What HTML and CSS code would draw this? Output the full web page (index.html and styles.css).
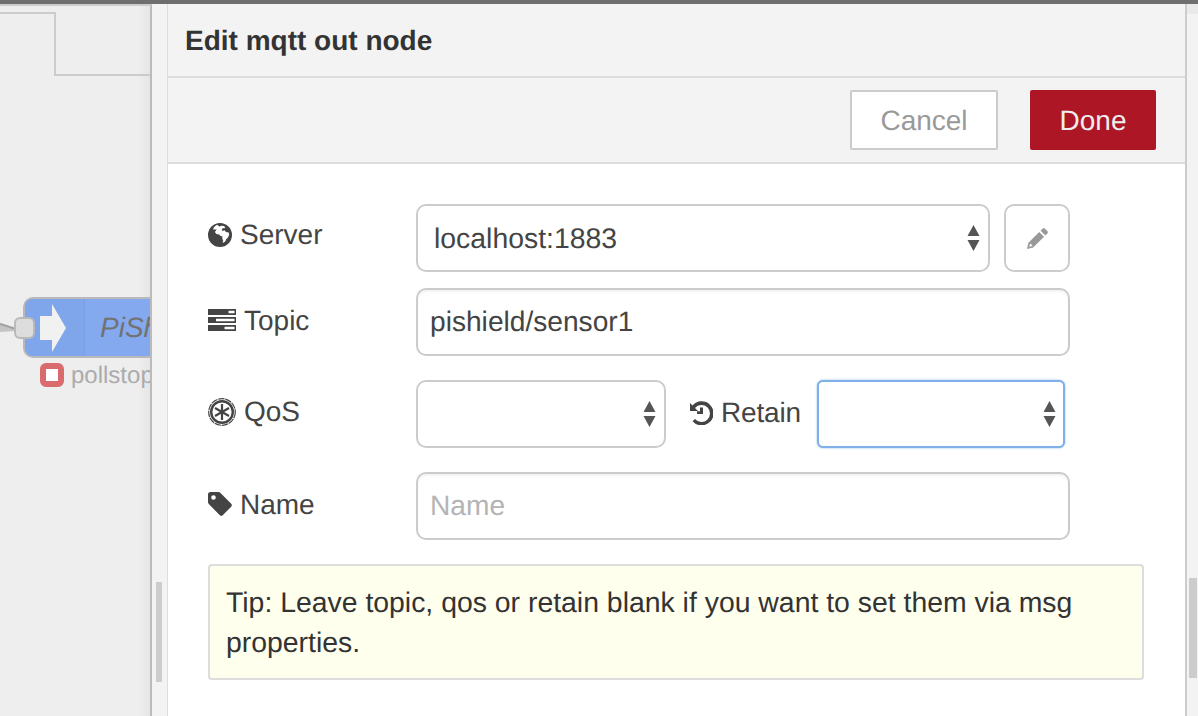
FILE: index.html
```html
<!DOCTYPE html>
<html lang="en">
<head>
<meta charset="utf-8">
<title>Edit mqtt out node</title>
<link rel="stylesheet" href="styles.css">
</head>
<body>
<div class="topbar"></div>
<div class="app">
  <div class="canvas">
    <div class="shade"></div>
    <div class="wire-a"></div>
    <div class="wire-b"></div>
    <svg class="link" viewBox="0 0 16 14"><path class="link-fill" d="M0 2l16 5v3L0 11z"/><path class="link-line" d="M0 3l16 5"/></svg>
    <div class="node">
      <div class="node-icon">
        <svg class="node-arrow" viewBox="0 0 26 48"><path d="M0 12h12V0l14 24-14 24V36H0z"/></svg>
      </div>
      <span class="node-label">PiShield</span>
    </div>
    <div class="port"></div>
    <div class="status">
      <span class="status-dot"></span>
      <span class="status-text">pollstop</span>
    </div>
  </div>
  <div class="gutter gutter-left"><div class="thumb thumb-left"></div></div>
  <div class="tray">
    <div class="tray-title">Edit mqtt out node</div>
    <div class="tray-toolbar">
      <button class="btn btn-cancel">Cancel</button>
      <button class="btn btn-done">Done</button>
    </div>
    <div class="tray-body">
      <div class="row row-server">
        <label class="label label-server">
          <svg class="icon icon-globe" viewBox="0 0 24 24"><path fill-rule="evenodd" d="M12 0a12 12 0 1 0 0 24 12 12 0 0 0 0-24zM9 1.700l2.500 1.800 2-.8 2.500.2 1.300 1.600-1.300 1-1-.4-1.300 1.400.8 1.400 2-.6 1.500 1.800 2.700.3.500 2.500-1.600 3-1.500 1.300-.7 2-1.800 1.400-1 .2.600-2.500-1-1.500.3-2.200-1.800-.6-1.600-1.500-2.800-.5-1.400-2 1.800-2.500L5 6.500l1-2.500z"/></svg>
          Server
        </label>
        <div class="select-wrap select-server">
          <select class="select"><option>localhost:1883</option></select>
          <svg class="updown" viewBox="0 0 12 26"><path d="M6 0l6 11H0zM0 15h12L6 26z"/></svg>
        </div>
        <button class="edit-btn">
          <svg class="icon-pencil" viewBox="0 0 24 24"><path d="M17.500 1.500a1.500 1.500 0 0 1 2 0l3 3a1.500 1.500 0 0 1 0 2l-2.300 2.300-5-5zM13.800 5.200l5 5L7.500 21.500 1 23l1.500-6.500zM4.300 17.200l-1 3.500 3.500-1-1-1.500z"/></svg>
        </button>
      </div>
      <div class="row">
        <label class="label label-topic">
          <svg class="icon icon-tasks" viewBox="0 0 28 22"><path fill-rule="evenodd" d="M0 0h28v6H0zM20.500 1.800v2.400h6V1.800zM0 8h28v6H0zM8 9.800v2.400h18.500V9.800zM0 16h28v6H0zM16.500 17.800v2.400h10v-2.400z"/></svg>
          Topic
        </label>
        <input class="input" type="text" value="pishield/sensor1">
      </div>
      <div class="row">
        <label class="label label-qos">
          <svg class="icon icon-qos" viewBox="0 0 28 28"><g fill="none" stroke="#444"><circle cx="14" cy="14" r="13.300" stroke-width="1.200" stroke-dasharray="6.500 .8"/><circle cx="14" cy="14" r="10.800" stroke-width="2.400"/><path stroke-width="2.200" d="M14 6v16M7 10l14 8M7 18l14-8"/></g><circle cx="14" cy="14" r="1.800" fill="#444"/></svg>
          QoS
        </label>
        <div class="select-wrap select-qos">
          <select class="select"><option></option></select>
          <svg class="updown" viewBox="0 0 12 26"><path d="M6 0l6 11H0zM0 15h12L6 26z"/></svg>
        </div>
        <label class="label label-retain">
          <svg class="icon icon-history" viewBox="0 0 24 24"><path d="M1 2v8h8L6 7a8.500 8.500 0 1 1 0 11l-2.500 2.200A12 12 0 1 0 3.500 4.500z"/><path d="M11 6.500h3V13h-6v-2.800h3z"/></svg>
          Retain
        </label>
        <div class="select-wrap select-retain">
          <select class="select select-focus"><option></option></select>
          <svg class="updown updown-retain" viewBox="0 0 12 26"><path d="M6 0l6 11H0zM0 15h12L6 26z"/></svg>
        </div>
      </div>
      <div class="row">
        <label class="label label-name">
          <svg class="icon icon-tag" viewBox="0 0 24 24"><path fill-rule="evenodd" d="M2.500 0h8a3 3 0 0 1 2 .9l10.500 10.600a2.400 2.400 0 0 1 0 3.400l-8 8a2.400 2.400 0 0 1-3.400 0L1 12.300A3.500 3.500 0 0 1 0 10V2.500A2.500 2.500 0 0 1 2.500 0zM5.500 3.200a2.300 2.300 0 1 0 0 4.600 2.300 2.300 0 0 0 0-4.600z"/></svg>
          Name
        </label>
        <input class="input" type="text" placeholder="Name">
      </div>
      <div class="tip">Tip: Leave topic, qos or retain blank if you want to set them via msg properties.</div>
    </div>
  </div>
  <div class="gutter gutter-right"><div class="thumb thumb-right"></div></div>
</div>
</body>
</html>
```

FILE: styles.css
```css
* { box-sizing: border-box; }
html, body { margin: 0; height: 716px; overflow: hidden; }
body { font-family: "Liberation Sans", Arial, sans-serif; color: #444; background: #fff; text-rendering: geometricPrecision; }

.topbar { height: 4px; background: #6e6e6e; }
.app { display: flex; height: 712px; }

/* workspace canvas */
.canvas { position: relative; width: 152px; flex: none; overflow: hidden; background: #eee; border-right: 2px solid #bbb; border-top: 2px solid #ccc; }
.shade { position: absolute; right: 0; top: 0; bottom: 0; width: 12px; background: linear-gradient(to right, rgba(0,0,0,0), rgba(0,0,0,.035)); }
.wire-a { position: absolute; left: 0; top: 6px; width: 56px; height: 2px; background: #ccc; z-index: 1; }
.wire-b { position: absolute; left: 54px; top: 6px; width: 96px; height: 64px; border-left: 2px solid #ccc; border-bottom: 2px solid #ccc; }
.link { position: absolute; left: 0; top: 315px; width: 16px; height: 14px; }
.link-fill { fill: #c4c4c4; }
.link-line { fill: none; stroke: #a2a2a2; stroke-width: 2; }
.node { position: absolute; left: 23px; top: 291px; width: 160px; height: 61px; display: flex; align-items: center; background: #84a9ee; border: 2px solid #b9b9b9; border-radius: 10px; }
.node-icon { width: 60px; height: 100%; flex: none; display: flex; align-items: center; padding-left: 15px; background: #7fa6ea; border-right: 1px solid #78a0e4; border-radius: 8px 0 0 8px; }
.node-arrow { width: 26px; height: 48px; fill: #f1f1f1; filter: blur(.5px); }
.node-label { margin-left: 15px; font-size: 28px; font-style: italic; color: #727272; white-space: nowrap; }
.port { position: absolute; left: 14px; top: 311px; width: 21px; height: 22px; background: #ddd; border: 2px solid #b9b9b9; border-radius: 6px; }
.status { position: absolute; left: 40px; top: 357px; height: 24px; display: flex; align-items: center; gap: 7px; white-space: nowrap; }
.status-dot { width: 24px; height: 24px; flex: none; background: #fff; border: 6px solid #d96a6e; border-radius: 6px; }
.status-text { font-size: 24px; line-height: 20px; margin-top: 1px; color: #ababab; }

/* side gutters */
.gutter { position: relative; flex: none; background: #f3f3f3; }
.gutter-left { width: 15px; }
.gutter-right { width: 11px; }
.gutter-right::before { content: ""; display: block; height: 10px; background: #e9e9e9; }
.thumb { position: absolute; height: 100px; background: #ccc; }
.thumb-left { left: 4px; top: 578px; width: 6px; }
.thumb-right { left: 2px; top: 574px; width: 8px; }

/* edit tray */
.tray { flex: none; width: 1020px; background: #fff; border-left: 1px solid #ddd; border-right: 2px solid #ccc; }
.tray-title { height: 74px; padding: 2px 17px 0; display: flex; align-items: center; background: #f3f3f3; border-bottom: 2px solid #ddd; font-size: 28px; font-weight: bold; color: #333; }
.tray-toolbar { height: 86px; padding-top: 12px; padding-right: 29px; display: flex; justify-content: flex-end; align-items: flex-start; gap: 32px; background: #f3f3f3; border-bottom: 2px solid #ddd; }
.btn { height: 60px; padding: 2px 0 0; font: 28px "Liberation Sans", Arial, sans-serif; text-rendering: geometricPrecision; border-radius: 2px; }
.btn-cancel { width: 148px; background: #fff; border: 2px solid #ccc; color: #999; }
.btn-done { width: 126px; background: #ad1625; border: 0; color: #eee; }

.tray-body { padding: 40px 40px 0; }
.row { display: flex; align-items: center; margin-bottom: 24px; height: 68px; }
.row-server { margin-bottom: 16px; }
.label { width: 208px; flex: none; display: flex; align-items: center; gap: 8px; font-size: 28px; color: #444; white-space: nowrap; }
.label-server { margin-bottom: 6px; }
.label-topic { margin-bottom: 2px; }
.label-qos { margin-bottom: 4px; }
.label-name { margin-bottom: 2px; }
.label-retain { width: auto; margin: 0 16px 2px 23px; letter-spacing: -.15px; }
.icon { flex: none; fill: #444; }
.icon-globe { width: 24px; height: 24px; }
.icon-tasks { width: 28px; height: 22px; margin-bottom: 3px; }
.icon-qos { width: 28px; height: 28px; }
.icon-tag { width: 24px; height: 24px; margin-bottom: 2px; }
.icon-history { width: 24px; height: 24px; }

.select-wrap { position: relative; flex: none; height: 68px; }
.select-server { width: 574px; }
.select-qos { width: 250px; }
.select-retain { width: 248px; }
.select { width: 100%; height: 100%; appearance: none; -webkit-appearance: none; padding: 2px 16px 0; font: 28.400px "Liberation Sans", Arial, sans-serif; text-rendering: geometricPrecision; color: #444; background: #fff; border: 2px solid #ccc; border-radius: 10px; outline: 0; }
.select-focus { border-color: #7fb0e8; border-radius: 6px; box-shadow: 0 0 2px #7fb0e8; }
.updown { position: absolute; right: 10px; top: 21px; width: 13px; height: 26px; fill: #555; }
.updown-retain { right: 9px; }
.edit-btn { width: 66px; height: 68px; flex: none; margin-left: 14px; padding: 0; display: flex; align-items: center; justify-content: center; background: #fff; border: 2px solid #ccc; border-radius: 10px; }
.icon-pencil { width: 23px; height: 23px; fill: #999; }
.input { width: 654px; height: 68px; flex: none; padding: 0 12px; font: 28.150px "Liberation Sans", Arial, sans-serif; text-rendering: geometricPrecision; color: #444; background: #fff; border: 2px solid #ccc; border-radius: 10px; box-shadow: inset 0 2px 2px rgba(0,0,0,.05); outline: 0; }
.input::placeholder { color: #b4b4b4; opacity: 1; }

.tip { width: 936px; height: 116px; padding: 17px 16px; background: #ffffee; border: 2px solid #ddd; border-radius: 4px; font-size: 28.400px; line-height: 40px; color: #333; }
```
